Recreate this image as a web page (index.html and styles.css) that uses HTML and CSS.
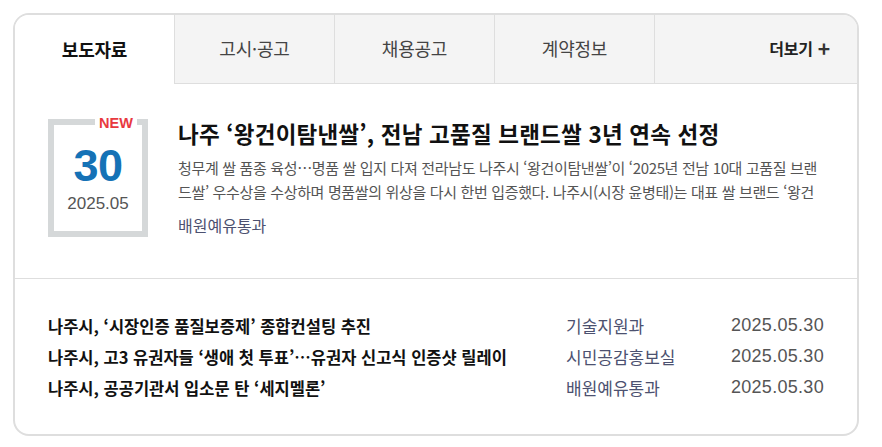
FILE: index.html
```html
<!DOCTYPE html>
<html lang="ko">
<head>
<meta charset="utf-8">
<link rel="stylesheet" href="styles.css">
</head>
<body>
<div class="card">
  <div class="tabs">
    <div class="tab active">보도자료</div>
    <div class="tab">고시·공고</div>
    <div class="tab">채용공고</div>
    <div class="tab">계약정보</div>
    <div class="tab more">더보기 <span class="plus">+</span></div>
  </div>
  <div class="feature">
    <div class="datebox">
      <span class="new">NEW</span>
      <div class="day">30</div>
      <div class="ym">2025.05</div>
    </div>
    <div class="feature-body">
      <div class="feature-title">나주 ‘왕건이탐낸쌀’, 전남 고품질 브랜드쌀 3년 연속 선정</div>
      <div class="feature-desc">청무계 쌀 품종 육성…명품 쌀 입지 다져 전라남도 나주시 ‘왕건이탐낸쌀’이 ‘2025년 전남 10대 고품질 브랜드쌀’ 우수상을 수상하며 명품쌀의 위상을 다시 한번 입증했다. 나주시(시장 윤병태)는 대표 쌀 브랜드 ‘왕건이탐낸쌀’이 전라남도가 주관한 평가에서 우수상을 받았다고 밝혔다.</div>
      <div class="feature-dept">배원예유통과</div>
    </div>
  </div>
  <ul class="list">
    <li class="row"><span class="row-title">나주시, ‘시장인증 품질보증제’ 종합컨설팅 추진</span><span class="row-dept">기술지원과</span><span class="row-date">2025.05.30</span></li>
    <li class="row"><span class="row-title">나주시, 고3 유권자들 ‘생애 첫 투표’…유권자 신고식 인증샷 릴레이</span><span class="row-dept">시민공감홍보실</span><span class="row-date">2025.05.30</span></li>
    <li class="row"><span class="row-title">나주시, 공공기관서 입소문 탄 ‘세지멜론’</span><span class="row-dept">배원예유통과</span><span class="row-date">2025.05.30</span></li>
  </ul>
</div>
</body>
</html>
```

FILE: styles.css
```css
* { box-sizing: border-box; }
html, body { margin: 0; padding: 0; background: #fff; }
body {
  font-family: "Noto Sans CJK KR", "Noto Sans", sans-serif;
  color: #111;
}
.card {
  margin: 13px 0 0 13px;
  width: 846px;
  height: 423px;
  border: 2px solid #dedede;
  border-radius: 16px;
  overflow: hidden;
  background: #fff;
}
.tabs {
  display: grid;
  grid-template-columns: 159px 160px 160px 160px 1fr;
  height: 69px;
}
.tab {
  display: flex;
  align-items: center;
  justify-content: center;
  background: #f4f4f4;
  border-left: 1px solid #dedede;
  border-bottom: 1px solid #dedede;
  font-size: 18px;
  color: #444;
  letter-spacing: -0.2px;
  padding-bottom: 2px;
}
.tab.active {
  background: #fff;
  border-left: none;
  border-bottom: none;
  color: #111;
  font-weight: 600;
}
.tab.more {
  justify-content: flex-end;
  padding-right: 27px;
  font-size: 16px;
  font-weight: 600;
  color: #222;
}
.plus {
  font-size: 21px;
  font-weight: 700;
  margin-left: 5px;
  line-height: 1;
  color: #333;
}
.feature {
  display: flex;
  align-items: flex-start;
  padding: 35px 33px 0 33px;
  height: 195px;
  border-bottom: 1px solid #dedede;
}
.datebox {
  position: relative;
  flex: none;
  width: 100px;
  height: 118px;
  border: 6px solid #d5d8d9;
  display: flex;
  flex-direction: column;
  align-items: center;
  padding-top: 17px;
}
.new {
  position: absolute;
  top: -10px;
  left: 41px;
  padding: 0 4px;
  background: #fff;
  color: #e8393f;
  font-family: "Liberation Sans", Arial, sans-serif;
  font-weight: 700;
  font-size: 14.5px;
  line-height: 16px;
}
.day {
  font-family: "Liberation Sans", Arial, sans-serif;
  font-weight: 700;
  font-size: 45px;
  line-height: 48px;
  color: #1572b6;
  letter-spacing: -0.5px;
}
.ym {
  font-family: "Liberation Sans", Arial, sans-serif;
  font-size: 17px;
  line-height: 20px;
  margin-top: 4px;
  color: #555;
}
.feature-body {
  margin-left: 30px;
  flex: 1;
  min-width: 0;
}
.feature-title {
  font-size: 22.5px;
  font-weight: 600;
  line-height: 28px;
  margin-top: 0;
  color: #111;
  letter-spacing: 0.2px;
}
.feature-desc {
  margin-top: 9px;
  font-size: 15px;
  line-height: 24px;
  height: 48px;
  overflow: hidden;
  color: #555;
  letter-spacing: -0.35px;
}
.feature-dept {
  margin-top: 10px;
  font-size: 16px;
  line-height: 22px;
  color: #4c5170;
  letter-spacing: 0;
}
.list {
  list-style: none;
  margin: 0;
  padding: 31px 33px 0 33px;
}
.row {
  display: flex;
  align-items: center;
  height: 31px;
  font-size: 16.5px;
}
.row-title {
  flex: 1;
  font-weight: 600;
  color: #111;
  letter-spacing: 0;
}
.row-dept {
  width: 163px;
  font-size: 17px;
  color: #4c5170;
  letter-spacing: 0;
}
.row-date {
  font-family: "Liberation Sans", Arial, sans-serif;
  font-size: 18px;
  letter-spacing: 0.3px;
  color: #555;
  width: 95px;
  text-align: right;
}
```
